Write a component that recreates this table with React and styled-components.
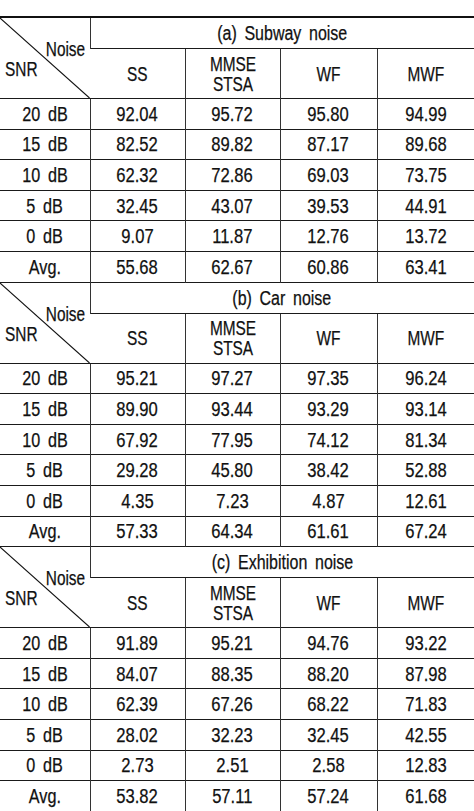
import React from "react";
import styled, { createGlobalStyle } from "styled-components";

const Global = createGlobalStyle`
  html, body { margin: 0; padding: 0; background: #fff; }
  body { font-family: "Liberation Sans", Arial, sans-serif; color: #111; }
`;

const Page = styled.div`
  padding-top: 16px;
  width: 474px;
`;

const Table = styled.table`
  width: 474px;
  border-collapse: collapse;
  table-layout: fixed;
  border-bottom: 2px solid #444;
`;

const Col = styled.col`
  width: ${(p) => p.$w}px;
`;

const Section = styled.tbody`
  &:first-of-type tr:first-child > * {
    border-top: 2px solid #111;
  }
`;

const baseCell = `
  padding: 0;
  text-align: center;
  vertical-align: middle;
  font-weight: normal;
  font-size: 20px;
  line-height: 20px;
  -webkit-text-stroke: 0.25px #111;
  border-top: 1px solid #1a1a1a;
  border-left: 1px solid #333;
  &:first-child { border-left: none; }
`;

const TitleCell = styled.th`
  ${baseCell}
  height: 30px;
`;

const HeadCell = styled.th`
  ${baseCell}
  height: 49px;
`;

const DataCell = styled.td`
  ${baseCell}
  height: 29.6px;
`;

const DiagCell = styled.th`
  ${baseCell}
  position: relative;
  border-left: none;
`;

const DiagLine = styled.svg`
  position: absolute;
  left: 0;
  top: 0;
  width: 100%;
  height: 100%;
  pointer-events: none;
`;

const DiagInner = styled.div`
  display: flex;
  flex-direction: column;
  height: 80px;
  padding-top: 21px;
  box-sizing: border-box;
`;

const Txt = styled.span`
  display: inline-block;
  white-space: nowrap;
  word-spacing: ${(p) => p.$ws || 0}px;
  transform: scaleX(${(p) => p.$sx || 0.83});
  transform-origin: ${(p) => p.$origin || "center"};
`;

const NoiseLabel = styled.div`
  align-self: flex-end;
  padding-right: 4px;
  text-align: right;
`;

const SnrLabel = styled.div`
  align-self: flex-start;
  padding-left: 5px;
  text-align: left;
`;

const methods = [["SS"], ["MMSE", "STSA"], ["WF"], ["MWF"]];
const snrs = ["20 dB", "15 dB", "10 dB", "5 dB", "0 dB", "Avg."];

const sections = [
  {
    title: "(a) Subway noise",
    rows: [
      ["92.04", "95.72", "95.80", "94.99"],
      ["82.52", "89.82", "87.17", "89.68"],
      ["62.32", "72.86", "69.03", "73.75"],
      ["32.45", "43.07", "39.53", "44.91"],
      ["9.07", "11.87", "12.76", "13.72"],
      ["55.68", "62.67", "60.86", "63.41"],
    ],
  },
  {
    title: "(b) Car noise",
    rows: [
      ["95.21", "97.27", "97.35", "96.24"],
      ["89.90", "93.44", "93.29", "93.14"],
      ["67.92", "77.95", "74.12", "81.34"],
      ["29.28", "45.80", "38.42", "52.88"],
      ["4.35", "7.23", "4.87", "12.61"],
      ["57.33", "64.34", "61.61", "67.24"],
    ],
  },
  {
    title: "(c) Exhibition noise",
    rows: [
      ["91.89", "95.21", "94.76", "93.22"],
      ["84.07", "88.35", "88.20", "87.98"],
      ["62.39", "67.26", "68.22", "71.83"],
      ["28.02", "32.23", "32.45", "42.55"],
      ["2.73", "2.51", "2.58", "12.83"],
      ["53.82", "57.11", "57.24", "61.68"],
    ],
  },
];

function Block({ title, rows }) {
  return (
    <Section>
      <tr>
        <DiagCell rowSpan={2}>
          <DiagLine viewBox="0 0 100 100" preserveAspectRatio="none">
            <line
              x1="0"
              y1="0"
              x2="100"
              y2="100"
              stroke="#111"
              strokeWidth="1.1"
              vectorEffect="non-scaling-stroke"
            />
          </DiagLine>
          <DiagInner>
            <NoiseLabel>
              <Txt $sx={0.77} $origin="right">Noise</Txt>
            </NoiseLabel>
            <SnrLabel>
              <Txt $sx={0.77} $origin="left">SNR</Txt>
            </SnrLabel>
          </DiagInner>
        </DiagCell>
        <TitleCell colSpan={4}>
          <Txt $sx={0.8} $ws={4}>{title}</Txt>
        </TitleCell>
      </tr>
      <tr>
        {methods.map((m) => (
          <HeadCell key={m.join("")}>
            <Txt $sx={0.77}>
              {m.map((line, i) => (
                <React.Fragment key={line}>
                  {i > 0 && <br />}
                  {line}
                </React.Fragment>
              ))}
            </Txt>
          </HeadCell>
        ))}
      </tr>
      {rows.map((r, i) => (
        <tr key={snrs[i]}>
          <DataCell>
            <Txt $sx={0.81} $ws={4}>{snrs[i]}</Txt>
          </DataCell>
          {r.map((v, j) => (
            <DataCell key={j}>
              <Txt $sx={0.83}>{v}</Txt>
            </DataCell>
          ))}
        </tr>
      ))}
    </Section>
  );
}

export default function App() {
  return (
    <Page>
      <Global />
      <Table>
        <colgroup>
          <Col $w={90} />
          <Col $w={95} />
          <Col $w={95} />
          <Col $w={97} />
          <Col $w={97} />
        </colgroup>
        {sections.map((s) => (
          <Block key={s.title} {...s} />
        ))}
      </Table>
    </Page>
  );
}
